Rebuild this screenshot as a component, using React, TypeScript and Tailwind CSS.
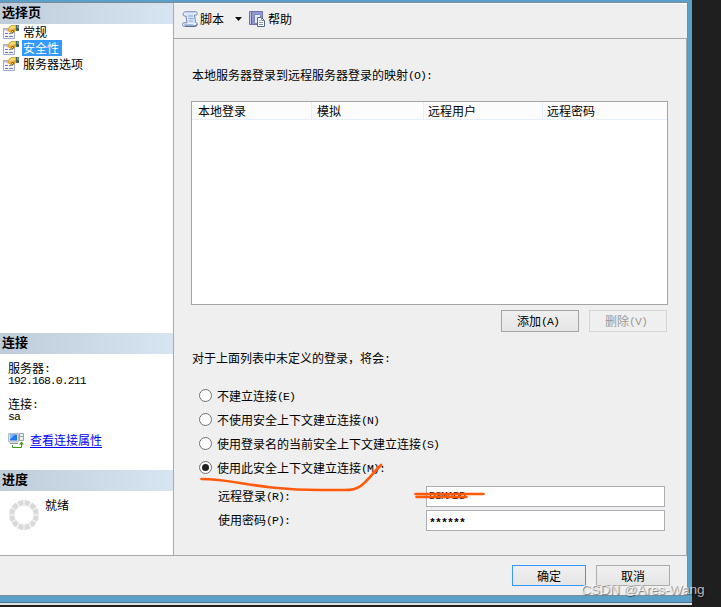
import type { ReactNode } from 'react'

const SANS = "font-['Noto_Sans_CJK_SC',sans-serif]"

// Latin runs take half the width of a Chinese glyph
const Mixed = ({ text }: { text: string }) => (
  <>
    {text.split(/([\x20-\x7e]+)/).map((part, i) =>
      i % 2 ? (
        <span
          key={i}
          className="font-['Liberation_Mono',monospace] text-[11.5px] leading-none tracking-[-0.92px] align-[1px]"
        >
          {part}
        </span>
      ) : (
        part
      ),
    )}
  </>
)

const PageIcon = () => (
  <svg className="w-4 h-4 shrink-0" viewBox="0 0 16 16" fill="none">
    <path d="M.5 4.500h11v10H.5z" fill="#f6f6fd" stroke="#a3a9c8" />
    <path d="M1 5h5v1.500H1z" fill="#b9c1e4" />
    <path d="M2 9.500h3M6 9.500h3M2 12.500h3M6 12.500h4" stroke="#7375c4" />
    <path d="M4 7l2-4 2.500-2H13l1 5-3 2.500L9 10 6.500 8z" fill="#e5a932" />
    <path d="M6.500 4.500L8.500 2H12l1 1.500-3 1.500-3 1z" fill="#ffd86b" />
    <path d="M13 1h3v6h-3z" fill="#43655e" />
    <path d="M14 1.500h1.500V4H14z" fill="#86aca2" />
    <path d="M8 7l1.500-1 2 1-2 2.500z" fill="#80601f" />
    <path d="M9 7h1v1H9z" fill="#ffdf64" />
  </svg>
)

const ScriptIcon = () => (
  <svg className="w-4 h-4 shrink-0" viewBox="0 0 16 16" fill="none">
    <path
      d="M3.500.800h10.200c2.200 0 2.200 3.200 0 3.200H12.500l1 7.500c2.500 0 2.500 3.700-.5 3.700H2c-2.200 0-2.200-3.400 0-3.400h3L4 5H2.200C.5 5 .800.800 3.500.800z"
      fill="#e5efff"
      stroke="#6b83ad"
    />
    <path d="M4 2.500h7.500l1 9.500H6.500L5 4z" fill="#d3e2fc" />
    <path d="M6 5h5M6.500 7.500h5M7 10h4" stroke="#8ca9dc" />
    <path d="M2 13.500h9" stroke="#a9bfdf" />
    <path d="M3 15.200h10c1.500 0 2-1 2-2" stroke="#3f587f" />
  </svg>
)

const HelpIcon = () => (
  <svg className="w-4 h-4 shrink-0" viewBox="0 0 16 16" fill="none">
    <path d="M.5.500h13v13H.5z" fill="#9497d2" stroke="#6c70ae" />
    <path d="M2.500 1v12" stroke="#6165a8" />
    <path d="M1.500 1v12" stroke="#c3c6ec" />
    <path d="M5.500 3.500h5l1 1v8h-6z" fill="#e5ecfa" stroke="#7888b4" />
    <path d="M8.500 6.500h4l3 3v6h-7z" fill="#fff" stroke="#4d688d" />
    <path d="M12.500 6.500v3h3M10 9.500h1.500M10 11.500h4M10 13.500h4" stroke="#7f98b8" />
  </svg>
)

const ConnectionIcon = () => (
  <svg className="w-4 h-4 shrink-0" viewBox="0 0 16 16" fill="none">
    <path d="M.5.500h10v8.500H.5z" fill="#d9dde4" stroke="#b4bdc9" />
    <path d="M2 1.500h7v6H2z" fill="#2475e8" />
    <path d="M2 1.500h5l-5 5z" fill="#7dbbff" />
    <path d="M2 10.500h8" stroke="#8c959f" />
    <path d="M11.500.500h4v7h-4z" fill="#eef0f2" stroke="#9aa1a9" />
    <path d="M12 3.500h3" stroke="#9aa1a9" />
    <path d="M4.500 12v2.500h9V10" stroke="#329b12" />
    <path d="M11 11.500L13.500 8.500l2.500 3z" fill="#329b12" />
  </svg>
)

const Spinner = () => (
  <svg className="w-[30px] h-[30px] shrink-0" viewBox="0 0 30 30">
    <circle
      cx="15"
      cy="15"
      r="12.2"
      fill="none"
      stroke="#dadada"
      strokeWidth="5.4"
      pathLength="120"
      strokeDasharray="8.4 1.6"
      strokeDashoffset="-.8"
    />
  </svg>
)

const SectionTitle = ({ children }: { children: ReactNode }) => (
  <div className="h-[21px] shrink-0 pl-[2px] leading-[18px] text-[13px] font-bold bg-linear-to-r from-[#bfcddb] to-[#d7e4f2]">
    {children}
  </div>
)

const pages = ['常规', '安全性', '服务器选项']

const columns = [
  { title: '本地登录', width: 'w-[120px] pl-[6px]' },
  { title: '模拟', width: 'w-[112px] pl-[5px]' },
  { title: '远程用户', width: 'w-[119px] pl-[4px]' },
  { title: '远程密码', width: 'flex-1 pl-[4px] border-r-0' },
]

const options = [
  '不建立连接(E)',
  '不使用安全上下文建立连接(N)',
  '使用登录名的当前安全上下文建立连接(S)',
  '使用此安全上下文建立连接(M):',
]

const Button = ({ text, className }: { text: string; className: string }) => (
  <button
    className={`flex items-center justify-center border bg-linear-to-b from-[#f0f0f0] to-[#e5e5e5] ${className}`}
  >
    <span>
      <Mixed text={text} />
    </span>
  </button>
)

const Sidebar = () => (
  <div className="flex flex-col w-[174px] shrink-0 bg-white border-r border-[#a9aab0]">
    <SectionTitle>选择页</SectionTitle>
    <div className="h-[309px]">
      {pages.map((page) => (
        <div key={page} className="flex items-center h-4 pl-[3px] gap-[3px]">
          <PageIcon />
          <span
            className={`h-4 leading-[15px] px-[1px] ${page === '安全性' ? 'bg-[#3399ff] text-white pr-[3px]' : ''}`}
          >
            {page}
          </span>
        </div>
      ))}
    </div>
    <SectionTitle>连接</SectionTitle>
    <div className="h-[116px] pl-2 pt-2 leading-3">
      <div className="h-3">
        <Mixed text="服务器:" />
      </div>
      <div className="h-3">
        <Mixed text="192.168.0.211" />
      </div>
      <div className="h-3 mt-3">
        <Mixed text="连接:" />
      </div>
      <div className="h-3">
        <Mixed text="sa" />
      </div>
      <div className="flex mt-[11px] gap-[6px]">
        <ConnectionIcon />
        <a className="text-[#0000ff] underline underline-offset-2 leading-[14px]">查看连接属性</a>
      </div>
    </div>
    <SectionTitle>进度</SectionTitle>
    <div className="flex pl-[9px] pt-[9px] gap-[6px]">
      <Spinner />
      <span className="leading-[10px]">就绪</span>
    </div>
  </div>
)

const Security = () => (
  <div className="flex-1 pl-[17px] pt-6 border-r border-[#a9aab0]">
    <div className="h-6 leading-6 pl-[1px]">
      <Mixed text="本地服务器登录到远程服务器登录的映射(O):" />
    </div>
    <div className="mt-[14px] w-[477px] h-[204px] bg-white border border-[#a3a4a8]">
      <div className="flex h-[18px] bg-[#fcfcfc] border-b border-[#e5eef9]">
        {columns.map(({ title, width }) => (
          <div key={title} className={`leading-[17px] border-r border-[#e5eef9] ${width}`}>
            {title}
          </div>
        ))}
      </div>
    </div>
    <div className="flex mt-[5px] ml-[310px] gap-[10px]">
      <Button text="添加(A)" className="w-[78px] h-[22px] pr-1 border-[#a5a5a5]" />
      <Button text="删除(V)" className="w-[78px] h-[22px] pr-1 border-[#d5d5d5] text-[#999] from-[#efefef] to-[#efefef]" />
    </div>
    <div className="h-6 mt-[14px] leading-6 pl-[1px]">
      <Mixed text="对于上面列表中未定义的登录，将会:" />
    </div>
    <div className="mt-[14px] pl-2">
      {options.map((option, i) => (
        <div key={option} className="flex items-center h-6 gap-[5px]">
          <span className="flex items-center justify-center w-[13px] h-[13px] mb-px rounded-full border border-[#707070] bg-white">
            {i === 3 && <span className="w-[7px] h-[7px] rounded-full bg-[#212121]" />}
          </span>
          <span>
            <Mixed text={option} />
          </span>
        </div>
      ))}
    </div>
    <div className="mt-1 pl-[27px]">
      <div className="flex items-center h-6">
        <span className="w-[208px]">
          <Mixed text="远程登录(R):" />
        </span>
        <div className="w-[239px] h-[21px] pl-[2px] leading-[15px] bg-white border border-[#abadb3]">
          <Mixed text="DSMADD" />
        </div>
      </div>
      <div className="flex items-center h-6">
        <span className="w-[208px]">
          <Mixed text="使用密码(P):" />
        </span>
        <div className="w-[239px] h-[21px] pl-[2px] leading-[21px] bg-white border border-[#abadb3] font-bold">
          <Mixed text="******" />
        </div>
      </div>
    </div>
  </div>
)

export default function App() {
  return (
    <div className={`relative w-[721px] h-[607px] overflow-hidden bg-[#1f1f1f] text-black text-[12px] ${SANS}`}>
      <div className="w-[692px] h-[602px] border-t-2 border-r-4 border-b-[6px] border-[#5ba0c8] bg-[#efefef]">
        <div className="flex flex-col h-full border-t border-r border-b border-[#7b8b98]">
          <div className="flex h-[552px]">
            <Sidebar />
            <div className="flex flex-col flex-1">
              <div className="flex items-center h-[35px] pl-2 pb-1 border-t border-t-white">
                <ScriptIcon />
                <span className="ml-[2px]">脚本</span>
                <svg className="ml-[11px] w-[7px] h-1" viewBox="0 0 7 4">
                  <path d="M0 0h7L3.5 4z" fill="#111" />
                </svg>
                <span className="ml-[7px]" />
                <HelpIcon />
                <span className="ml-[3px]">帮助</span>
              </div>
              <div className="flex flex-1 border-t border-[#a9aab0]">
                <Security />
              </div>
            </div>
          </div>
          <div className="flex flex-1 pt-[9px] pl-[512px] gap-[10px] border-t border-[#a9aab0]">
            <Button text="确定" className="w-[74px] h-[21px] border-[#3399ff]" />
            <Button text="取消" className="w-[74px] h-[21px] border-[#acacac]" />
          </div>
        </div>
      </div>
      <div className="w-[692px] h-[3px] bg-[#dfe3e5] border-t border-[#47728c]" />
      <svg className="absolute left-0 top-0 w-full h-full" viewBox="0 0 721 607" fill="none" strokeLinecap="round">
        <path
          d="M201.500 479C235 479 257 490 320 490H345C363 490 365 481 381 465"
          stroke="#ff5a0a"
          strokeWidth="2.600"
        />
        <path d="M415.500 494H483.500M416.500 497H466.500" stroke="#ff5a0a" strokeWidth="2.600" />
      </svg>
      <div className="absolute left-[581px] top-[580px] text-[13.600px] leading-[20px] whitespace-nowrap font-['Liberation_Sans',sans-serif] text-white/70 [text-shadow:1px_1px_1px_rgba(0,0,0,0.5)]">
        CSDN @Ares-Wang
      </div>
    </div>
  )
}
